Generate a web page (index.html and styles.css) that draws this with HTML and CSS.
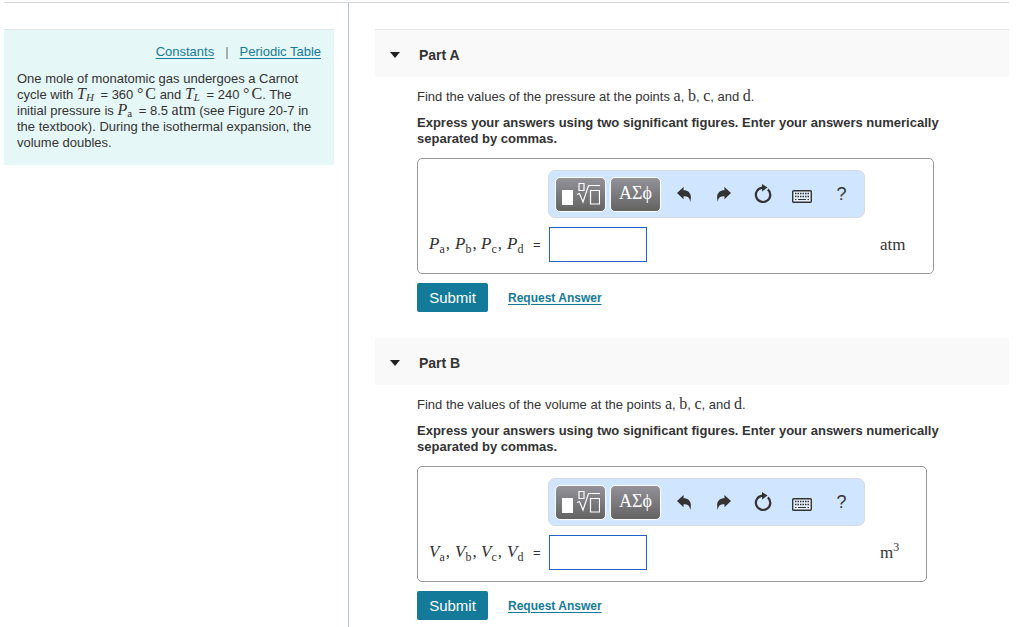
FILE: index.html
```html
<!DOCTYPE html>
<html lang="en">
<head>
<meta charset="utf-8">
<title>Carnot cycle</title>
<link rel="stylesheet" href="styles.css">
</head>
<body>
<svg class="defs" aria-hidden="true">
  <symbol id="root" viewBox="0 0 38 24">
    <path d="M0 8h11v15H0z" fill="#fff"/>
    <path d="M17 1.500h5v7h-5zM28.500 8.500h9v13.500h-9zM15 12.500l2.500-1 3.500 8.500 5.500-16.500h11.500" fill="none" stroke="#fff" stroke-width="1.200"/>
  </symbol>
  <symbol id="undo" viewBox="0 0 16 16">
    <path d="M0 6.500 7 0v3.500c6 0 9.500 4.500 7 12.500C14 11.500 11.500 9.700 7 9.800V13z" fill="#333"/>
  </symbol>
  <symbol id="reset" viewBox="0 0 18 20">
    <path d="M13.800 5.300a7.200 7.200 0 1 1-5.500-1.700" fill="none" stroke="#333" stroke-width="2.200"/>
    <path d="M8 0l5.500 3.500L8 7.500z" fill="#333"/>
  </symbol>
  <symbol id="keys" viewBox="0 0 20 13">
    <rect x=".7" y=".7" width="18.600" height="11.600" rx="1" fill="#e6f1ff" stroke="#333" stroke-width="1.400"/>
    <path d="M3 3.500h14M3 6.500h14" stroke="#333" stroke-width="1.500" stroke-dasharray="1.500 1"/>
    <path d="M3 9.500h1.500M6 9.500h8M15.500 9.500H17" stroke="#333" stroke-width="1.200"/>
  </symbol>
</svg>
<div class="page">
  <aside class="side">
    <div class="problem">
      <nav class="refs"><a href="#">Constants</a><span class="bar">|</span><a href="#">Periodic Table</a></nav>
      <p>One mole of monatomic gas undergoes a Carnot<br>
      cycle with <span class="math"><i>T</i><sub><i>H</i></sub></span> = 360 <span class="math"><span class="deg">°</span>C</span> and <span class="math"><i>T</i><sub><i>L</i></sub></span> = 240 <span class="math"><span class="deg">°</span>C</span>. The<br>
      initial pressure is <span class="math"><i>P</i><sub>a</sub></span> = 8.5 <span class="math">atm</span> (see Figure 20-7 in<br>
      the textbook). During the isothermal expansion, the<br>
      volume doubles.</p>
    </div>
  </aside>
  <main class="parts">
    <section class="part">
      <h2 class="head"><span class="caret"></span>Part A</h2>
      <div class="body">
        <p>Find the values of the pressure at the points <span class="math">a</span>, <span class="math">b</span>, <span class="math">c</span>, and <span class="math">d</span>.</p>
        <p class="instr">Express your answers using two significant figures. Enter your answers numerically separated by commas.</p>
        <div class="answer">
          <div class="tools">
            <button class="key" aria-label="Templates"><svg class="i-root"><use href="#root"/></svg></button>
            <button class="key greek">ΑΣϕ</button>
            <button class="tool" aria-label="Undo"><svg class="i-arrow"><use href="#undo"/></svg></button>
            <button class="tool" aria-label="Redo"><svg class="i-arrow flip"><use href="#undo"/></svg></button>
            <button class="tool" aria-label="Reset"><svg class="i-reset"><use href="#reset"/></svg></button>
            <button class="tool" aria-label="Keyboard shortcuts"><svg class="i-keys"><use href="#keys"/></svg></button>
            <button class="tool">?</button>
          </div>
          <label class="vars" for="a"><span class="var"><i>P</i><sub>a</sub>,</span><span class="var"><i>P</i><sub>b</sub>,</span><span class="var"><i>P</i><sub>c</sub>,</span><span class="var"><i>P</i><sub>d</sub></span><span class="eq">=</span></label>
          <input class="field" id="a" type="text">
          <span class="unit">atm</span>
        </div>
        <div class="actions"><button class="submit">Submit</button><a href="#">Request Answer</a></div>
      </div>
    </section>
    <section class="part">
      <h2 class="head"><span class="caret"></span>Part B</h2>
      <div class="body">
        <p>Find the values of the volume at the points <span class="math">a</span>, <span class="math">b</span>, <span class="math">c</span>, and <span class="math">d</span>.</p>
        <p class="instr">Express your answers using two significant figures. Enter your answers numerically separated by commas.</p>
        <div class="answer">
          <div class="tools">
            <button class="key" aria-label="Templates"><svg class="i-root"><use href="#root"/></svg></button>
            <button class="key greek">ΑΣϕ</button>
            <button class="tool" aria-label="Undo"><svg class="i-arrow"><use href="#undo"/></svg></button>
            <button class="tool" aria-label="Redo"><svg class="i-arrow flip"><use href="#undo"/></svg></button>
            <button class="tool" aria-label="Reset"><svg class="i-reset"><use href="#reset"/></svg></button>
            <button class="tool" aria-label="Keyboard shortcuts"><svg class="i-keys"><use href="#keys"/></svg></button>
            <button class="tool">?</button>
          </div>
          <label class="vars" for="b"><span class="var"><i>V</i><sub>a</sub>,</span><span class="var"><i>V</i><sub>b</sub>,</span><span class="var"><i>V</i><sub>c</sub>,</span><span class="var"><i>V</i><sub>d</sub></span><span class="eq">=</span></label>
          <input class="field" id="b" type="text">
          <span class="unit">m<sup>3</sup></span>
        </div>
        <div class="actions"><button class="submit">Submit</button><a href="#">Request Answer</a></div>
      </div>
    </section>
  </main>
</div>
</body>
</html>
```
FILE: styles.css
```css
* { box-sizing: border-box; }
body {
  margin: 0;
  padding: 2px 15px 0 4px;
  font: 13px/16px "Liberation Sans", Arial, sans-serif;
  color: #333;
  background: #fff;
}
p, h2 { margin: 0; }
a { color: #147a99; text-underline-offset: 2px; }
button { font: inherit; color: inherit; border: 0; padding: 0; background: none; cursor: pointer; }
.defs { display: none; }
.page { display: flex; min-height: calc(100vh - 2px); border-top: 1px solid #d8d8d8; }
.side { flex: 0 0 345px; padding: 26px 14px 0 0; border-right: 1px solid #b4c6d6; }
.problem { padding: 14px 13px; border-top: 1px solid #dfe6e6; background: #e6f7f7; }
.refs { display: flex; justify-content: flex-end; gap: 11px; margin-bottom: 11px; }
.bar { color: #777; }
.math { font: 16px/16px "Liberation Serif", serif; }
sub, sup { font-size: 12px; line-height: 0; }
.problem .math { line-height: 0; }
.problem sub { margin-right: 3px; font-size: 11px; vertical-align: -2px; }
.deg { margin-right: 2px; }

.parts { flex: 1; padding: 26px 0 0 26px; min-width: 0; }
.head {
  display: flex; align-items: center; gap: 19px;
  height: 48px; padding: 2px 0 0 15px;
  border-top: 1px solid #e6e6e6;
  background: #f9f9f9;
  font-size: 14px;
}
.part + .part .head { height: 47px; border-top: 0; }
.caret { border: 5px solid transparent; border-width: 6px 5px 0; border-top-color: #222; }
.body { padding: 12px 60px 26px 42px; }
.body .math { line-height: 0; }
.instr { margin: 10px 0 11px; font-weight: bold; }
.answer {
  display: grid;
  grid-template-columns: 119px 317px auto;
  row-gap: 9px;
  align-items: center;
  width: fit-content;
  padding: 11px 27px 11px 11px;
  border: 1px solid #999;
  border-radius: 5px;
}
.tools {
  grid-column: 2;
  display: flex; align-items: center;
  height: 48px; padding: 0 3px 0 6px;
  border: 1px solid #d8dade;
  border-radius: 7px;
  background: #d0e5ff;
}
.key {
  display: grid; place-items: center;
  width: 51px; height: 35px; margin-right: 4px;
  border: 1px solid #fff; border-radius: 5px;
  background: linear-gradient(#929299, #636363);
  color: #fff;
}
.greek { padding-bottom: 3px; font: 18px/20px "Liberation Serif", serif; }
.tool { display: grid; place-items: center; flex: 1; height: 35px; font-size: 18px; }
.i-root { width: 38px; height: 24px; }
.i-arrow { width: 15px; height: 17px; }
.flip { transform: scaleX(-1); }
.i-reset { width: 18px; height: 20px; }
.i-keys { width: 20px; height: 13px; margin-top: 4px; }
.vars { grid-column: 1; display: flex; align-items: baseline; font: 17px/20px "Liberation Serif", serif; }
.var { width: 26px; white-space: nowrap; }
.var sub { margin-right: 1px; }
.eq { font: 13px/20px "Liberation Sans", sans-serif; }
.field { width: 98px; height: 35px; margin-left: 1px; padding: 0 6px; border: 1px solid #2460c8; background: #fff; font: inherit; }
.unit { margin-left: 15px; font: 17px/16px "Liberation Serif", serif; }
.actions { display: flex; align-items: center; gap: 20px; margin-top: 9px; font-size: 12px; font-weight: bold; }
.submit { width: 71px; height: 29px; border-radius: 2px; background: #147a99; color: #fff; font-size: 15px; font-weight: normal; }
```
